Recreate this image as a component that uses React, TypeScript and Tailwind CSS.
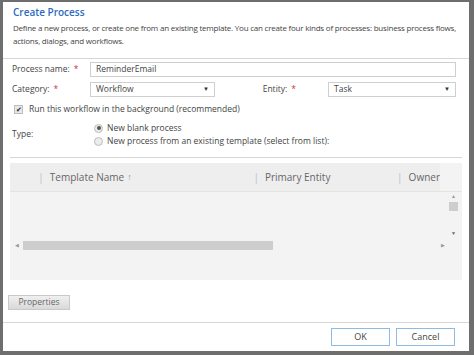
import { useState } from "react";

const font = { fontFamily: '"Open Sans", "Noto Sans", sans-serif' };

function Req() {
  return <span className="text-[#d0313a] ml-1">*</span>;
}

function Select({ value, className }: any) {
  return (
    <div
      className={`flex items-center justify-between h-[15px] border border-[#cfcfcf] bg-white px-[5px] ${className}`}
    >
      <span>{value}</span>
      <span className="text-[6px] text-[#333]">▼</span>
    </div>
  );
}

export default function App() {
  const [type, setType] = useState("blank");

  return (
    <div
      className="w-[474px] h-[355px] bg-[#6e6e6e] pl-[3px] pt-[2px] pr-[5px] pb-[4px] text-[8.5px] text-[#444]"
      style={font}
    >
      <div className="w-full h-full bg-white flex flex-col">
        {/* header */}
        <div className="px-[10px] pt-[3px] pb-[11px] border-b border-[#d6d6d6]">
          <div className="text-[10px] font-semibold text-[#2c6bbd] leading-[14px]">
            Create Process
          </div>
          <div className="mt-[2px] leading-[13px] text-[8px] tracking-[-0.22px] whitespace-nowrap">
            Define a new process, or create one from an existing template. You
            can create four kinds of processes: business process flows,
            <br />
            actions, dialogs, and workflows.
          </div>
        </div>

        {/* form */}
        <div className="px-[9px] pt-[3px]">
          <div className="flex items-center h-[15px]">
            <div className="w-[78px]">
              Process name:
              <Req />
            </div>
            <div className="flex-1 h-[15px] border border-[#cfcfcf] px-[5px] flex items-center mr-[4px]">
              ReminderEmail
            </div>
          </div>

          <div className="flex items-center h-[15px] mt-[5px]">
            <div className="w-[78px]">
              Category:
              <Req />
            </div>
            <Select value="Workflow" className="w-[125px]" />
            <div className="w-[113px] text-right pr-[32px]">
              Entity:
              <Req />
            </div>
            <Select value="Task" className="flex-1 mr-[4px]" />
          </div>

          <div className="flex items-center mt-[5px] h-[14px] pl-[2px]">
            <div className="w-[9px] h-[9px] bg-[#e8e8e8] border border-[#bdbdbd] flex items-center justify-center text-[7px] text-[#222] leading-none">
              ✔
            </div>
            <span className="ml-[6px]">
              Run this workflow in the background (recommended)
            </span>
          </div>

          <div className="flex mt-[6px]">
            <div className="w-[82px] pt-[6px]">Type:</div>
            <div className="flex flex-col gap-[1px]">
              {[
                ["blank", "New blank process"],
                ["template", "New process from an existing template (select from list):"],
              ].map(([k, label]) => (
                <div
                  key={k}
                  onClick={() => setType(k)}
                  className="flex items-center h-[12px] cursor-pointer"
                >
                  <div className="w-[9px] h-[9px] rounded-full border border-[#bdbdbd] bg-[#ececec] flex items-center justify-center">
                    {type === k && (
                      <div className="w-[4px] h-[4px] rounded-full bg-[#555]" />
                    )}
                  </div>
                  <span className="ml-[4px]">{label}</span>
                </div>
              ))}
            </div>
          </div>
        </div>

        <div className="mx-[7px] mt-[10px] border-t border-[#d6d6d6]" />

        {/* grid */}
        <div className="mx-[7px] mt-[5px] h-[117px] bg-[#f4f3f4] flex flex-col">
          <div className="flex h-[29px] bg-[#efeeef] border-b border-[#e4e4e4] text-[10px] text-[#666]">
            <div className="w-[430px] flex items-center overflow-hidden">
              <div className="w-[29px]" />
              <div className="w-[220px] flex items-center">
                <span className="text-[#bbb] mr-[6px]">|</span>
                Template Name
                <span className="ml-[3px] text-[9px] text-[#999]">↑</span>
              </div>
              <div className="w-[147px] flex items-center">
                <span className="text-[#bbb] mr-[6px]">|</span>
                Primary Entity
              </div>
              <div className="flex items-center">
                <span className="text-[#bbb] mr-[6px]">|</span>
                Owner
              </div>
            </div>
            <div className="flex-1 bg-[#f4f3f4]" />
          </div>

          <div className="flex h-[48px]">
            <div className="flex-1" />
            <div className="w-[11px] mr-[3px] flex flex-col items-center text-[#999]">
              <span className="text-[5px] mt-[2px] leading-none">▲</span>
              <div className="w-[9px] h-[9px] bg-[#cdcdcd] mt-[3px]" />
              <span className="text-[5px] mt-auto mb-[4px] leading-none text-[#666]">▼</span>
            </div>
          </div>

          <div className="flex items-center h-[11px] mr-[14px] text-[#999]">
            <span className="text-[5px] w-[13px] text-center">◀</span>
            <div className="w-[250px] h-[9px] bg-[#cdcdcd]" />
            <div className="flex-1" />
            <span className="text-[5px] w-[10px] text-center">▶</span>
          </div>
        </div>

        {/* properties */}
        <div className="px-[5px] mt-[15px]">
          <button className="w-[62px] h-[15px] border border-[#c9c9c9] bg-gradient-to-b from-[#f0f0f0] to-[#d9d9d9] text-[#666] text-[8.5px] leading-none">
            Properties
          </button>
        </div>

        <div className="mt-auto border-t border-[#d6d6d6] h-[29px] flex items-center justify-end gap-[6px] pr-[14px]">
          <button className="w-[59px] h-[18px] border border-[#8dbbe3] bg-white text-[#444] text-[9px]">
            OK
          </button>
          <button className="w-[59px] h-[18px] border border-[#8dbbe3] bg-white text-[#444] text-[9px]">
            Cancel
          </button>
        </div>
      </div>
    </div>
  );
}
